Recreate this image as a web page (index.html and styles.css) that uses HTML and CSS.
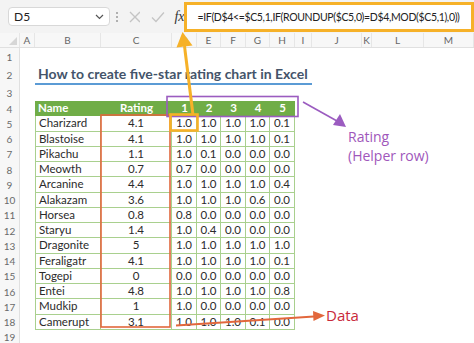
FILE: index.html
```html
<!DOCTYPE html>
<html lang="en">
<head>
    <meta charset="UTF-8">
    <meta name="viewport" content="width=device-width, initial-scale=1.0">
    <title>Five-star rating chart</title>
    <link rel="stylesheet" href="styles.css">
</head>
<body>
    <div class="app">
        <div class="toolbar">
            <div class="namebox">
                <span>D5</span>
                <svg class="chevron" width="9" height="6" viewBox="0 0 9 6"><path d="M1 1 L4.5 4.5 L8 1" fill="none" stroke="#555" stroke-width="1.2"/></svg>
            </div>
            <div class="dots"><i></i><i></i><i></i></div>
            <svg class="tool-icon" width="12" height="12" viewBox="0 0 12 12"><path d="M1 1 L11 11 M11 1 L1 11" stroke="#c4c4c4" stroke-width="1.3"/></svg>
            <svg class="tool-icon" width="14" height="12" viewBox="0 0 14 12"><path d="M1 6.5 L5 10.5 L13 1.5" fill="none" stroke="#c4c4c4" stroke-width="1.3"/></svg>
            <span class="fx">fx</span>
            <div class="formula">=IF(D$4&lt;=$C5,1,IF(ROUNDUP($C5,0)=D$4,MOD($C5,1),0))</div>
        </div>

        <div class="sheet">
            <div class="row colhead">
                <div class="corner"></div>
                <div>A</div><div>B</div><div>C</div><div>D</div><div>E</div><div>F</div><div>G</div>
                <div>H</div><div>I</div><div>J</div><div>K</div><div>L</div><div>M</div>
            </div>
            <div class="row r1"><div class="rh">1</div></div>
            <div class="row r2"><div class="rh">2</div><div class="title">How to create five-star rating chart in Excel</div></div>
            <div class="row r3"><div class="rh">3</div></div>
            <div class="row thead">
                <div class="rh">4</div><div></div>
                <div class="c name">Name</div><div class="c">Rating</div>
                <div class="c">1</div><div class="c">2</div><div class="c">3</div><div class="c">4</div><div class="c">5</div>
            </div>
            <div class="row tr"><div class="rh">5</div><div></div><div class="c name">Charizard</div><div class="c">4.1</div><div class="c">1.0</div><div class="c">1.0</div><div class="c">1.0</div><div class="c">1.0</div><div class="c">0.1</div></div>
            <div class="row tr"><div class="rh">6</div><div></div><div class="c name">Blastoise</div><div class="c">4.1</div><div class="c">1.0</div><div class="c">1.0</div><div class="c">1.0</div><div class="c">1.0</div><div class="c">0.1</div></div>
            <div class="row tr"><div class="rh">7</div><div></div><div class="c name">Pikachu</div><div class="c">1.1</div><div class="c">1.0</div><div class="c">0.1</div><div class="c">0.0</div><div class="c">0.0</div><div class="c">0.0</div></div>
            <div class="row tr"><div class="rh">8</div><div></div><div class="c name">Meowth</div><div class="c">0.7</div><div class="c">0.7</div><div class="c">0.0</div><div class="c">0.0</div><div class="c">0.0</div><div class="c">0.0</div></div>
            <div class="row tr"><div class="rh">9</div><div></div><div class="c name">Arcanine</div><div class="c">4.4</div><div class="c">1.0</div><div class="c">1.0</div><div class="c">1.0</div><div class="c">1.0</div><div class="c">0.4</div></div>
            <div class="row tr"><div class="rh">10</div><div></div><div class="c name">Alakazam</div><div class="c">3.6</div><div class="c">1.0</div><div class="c">1.0</div><div class="c">1.0</div><div class="c">0.6</div><div class="c">0.0</div></div>
            <div class="row tr"><div class="rh">11</div><div></div><div class="c name">Horsea</div><div class="c">0.8</div><div class="c">0.8</div><div class="c">0.0</div><div class="c">0.0</div><div class="c">0.0</div><div class="c">0.0</div></div>
            <div class="row tr"><div class="rh">12</div><div></div><div class="c name">Staryu</div><div class="c">1.4</div><div class="c">1.0</div><div class="c">0.4</div><div class="c">0.0</div><div class="c">0.0</div><div class="c">0.0</div></div>
            <div class="row tr"><div class="rh">13</div><div></div><div class="c name">Dragonite</div><div class="c">5</div><div class="c">1.0</div><div class="c">1.0</div><div class="c">1.0</div><div class="c">1.0</div><div class="c">1.0</div></div>
            <div class="row tr"><div class="rh">14</div><div></div><div class="c name">Feraligatr</div><div class="c">4.1</div><div class="c">1.0</div><div class="c">1.0</div><div class="c">1.0</div><div class="c">1.0</div><div class="c">0.1</div></div>
            <div class="row tr"><div class="rh">15</div><div></div><div class="c name">Togepi</div><div class="c">0</div><div class="c">0.0</div><div class="c">0.0</div><div class="c">0.0</div><div class="c">0.0</div><div class="c">0.0</div></div>
            <div class="row tr"><div class="rh">16</div><div></div><div class="c name">Entei</div><div class="c">4.8</div><div class="c">1.0</div><div class="c">1.0</div><div class="c">1.0</div><div class="c">1.0</div><div class="c">0.8</div></div>
            <div class="row tr"><div class="rh">17</div><div></div><div class="c name">Mudkip</div><div class="c">1</div><div class="c">1.0</div><div class="c">0.0</div><div class="c">0.0</div><div class="c">0.0</div><div class="c">0.0</div></div>
            <div class="row tr"><div class="rh">18</div><div></div><div class="c name">Camerupt</div><div class="c">3.1</div><div class="c">1.0</div><div class="c">1.0</div><div class="c">1.0</div><div class="c">0.1</div><div class="c">0.0</div></div>
            <div class="row r19"><div class="rh">19</div></div>
        </div>

        <!-- callouts drawn over the sheet -->
        <svg class="overlay" width="474" height="343" viewBox="0 0 474 343">
            <rect x="101" y="115" width="69" height="212" fill="none" stroke="#e2673c" stroke-width="1.6"/>
            <rect x="167" y="96.5" width="131" height="20" fill="none" stroke="#9b5cc0" stroke-width="1.6"/>
            <rect x="170.5" y="114.5" width="27" height="16" fill="none" stroke="#f6b128" stroke-width="2.6"/>
            <line x1="184.5" y1="46" x2="193" y2="115" stroke="#f6b128" stroke-width="3"/>
            <polygon points="182.5,32 176.5,47.5 192.5,45.5" fill="#f6b128"/>
            <line x1="303" y1="102" x2="337" y2="121" stroke="#9b5cc0" stroke-width="1.6"/>
            <polygon points="346,127 333,125 340,114" fill="#9b5cc0"/>
            <line x1="176" y1="325.5" x2="314" y2="316.5" stroke="#e2673c" stroke-width="1.8"/>
            <polygon points="325,315.5 313,311 313.5,321" fill="#e2673c"/>
        </svg>
        <div class="note note-rating">Rating<br>(Helper row)</div>
        <div class="note note-data">Data</div>
    </div>
</body>
</html>
```

FILE: styles.css
```css
body {
    margin: 0;
    font-family: 'Lato', 'Liberation Sans', sans-serif;
    background: #fff;
    color: #333;
}
.app {
    position: relative;
    width: 474px;
    height: 343px;
    overflow: hidden;
    --cols: 20px 15px 66px 71px 25px 24px 25px 24px 25px 17px 50px 10px 52px 1fr;
}
.toolbar {
    height: 33px;
    background: #f3f3f3;
    display: flex;
    align-items: center;
}
.namebox {
    box-sizing: border-box;
    margin-left: 8px;
    width: 102px;
    height: 19px;
    padding: 0 5px 0 5px;
    background: #fff;
    border: 1px solid #d8d8d8;
    border-radius: 4px;
    display: flex;
    align-items: center;
    justify-content: space-between;
    font-size: 12px;
    color: #222;
}
.dots {
    margin-left: 6px;
    display: flex;
    flex-direction: column;
    gap: 2px;
}
.dots i {
    width: 2px;
    height: 2px;
    background: #9a9a9a;
    border-radius: 50%;
}
.tool-icon {
    margin-left: 11px;
}
.fx {
    margin-left: 9px;
    font-family: 'Liberation Serif', serif;
    font-style: italic;
    font-size: 14px;
    color: #333;
}
.formula {
    box-sizing: border-box;
    margin-left: auto;
    width: 291px;
    height: 30px;
    margin-top: 1px;
    padding-left: 10px;
    background: #fff;
    border: 3px solid #f6b128;
    display: flex;
    align-items: center;
    font-family: 'Lato', sans-serif;
    font-size: 10.5px;
    letter-spacing: -0.35px;
    color: #222;
    white-space: nowrap;
    overflow: hidden;
}
.row {
    display: grid;
    grid-template-columns: var(--cols);
    height: 15.25px;
}
.colhead {
    height: 14px;
    background: #f7f7f7;
    border-bottom: 1px solid #e0e0e0;
    font-size: 10px;
    color: #666;
}
.colhead div {
    text-align: center;
    line-height: 14px;
    border-right: 1px solid #e6e6e6;
}
.colhead .corner {
    position: relative;
}
.colhead .corner::after {
    content: '';
    position: absolute;
    right: 2px;
    bottom: 2px;
    border-left: 8px solid transparent;
    border-bottom: 8px solid #d6d6d6;
}
.rh {
    background: #f7f7f7;
    border-right: 1px solid #e0e0e0;
    text-align: center;
    font-size: 10px;
    color: #6a6a6a;
    display: flex;
    align-items: center;
    justify-content: center;
}
.r1 { height: 17px; }
.r2 { height: 20px; }
.r3 { height: 16px; }
.r19 { height: 15px; }
.title {
    grid-column: 3 / 11;
    box-sizing: border-box;
    border-bottom: 2px solid #5b9bd5;
    padding-left: 3px;
    font-weight: bold;
    font-size: 14px;
    line-height: 18px;
    color: #44546a;
    white-space: nowrap;
}
.c {
    box-sizing: border-box;
    text-align: center;
    font-size: 11.5px;
    line-height: 14px;
    white-space: nowrap;
}
.c.name {
    text-align: left;
    padding-left: 3px;
}
.thead .c {
    background: #70ad47;
    color: #fff;
    font-weight: bold;
}
.tr .c {
    border-right: 1px solid #a9d08e;
    border-bottom: 1px solid #a9d08e;
    color: #2b2b2b;
}
.tr .c.name {
    border-left: 1px solid #a9d08e;
}
.overlay {
    position: absolute;
    top: 0;
    left: 0;
    pointer-events: none;
}
.note {
    position: absolute;
    font-family: 'Open Sans', sans-serif;
    font-size: 14px;
    line-height: 19px;
}
.note-rating {
    left: 348px;
    top: 127px;
    color: #a057bb;
}
.note-data {
    left: 326px;
    top: 305px;
    font-size: 15px;
    line-height: 20px;
    color: #c9283a;
}
```
